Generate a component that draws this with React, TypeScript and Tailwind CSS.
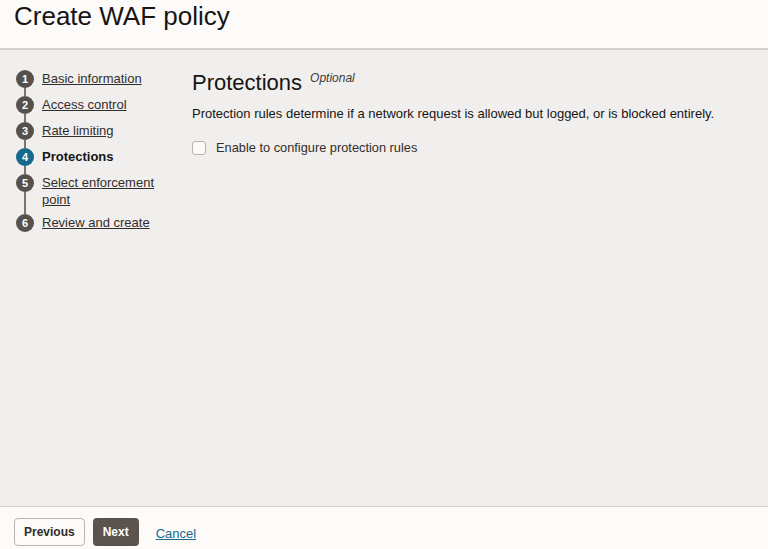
import React from 'react';

const STEPS = [
  { id: 1, label: 'Basic information' },
  { id: 2, label: 'Access control' },
  { id: 3, label: 'Rate limiting' },
  { id: 4, label: 'Protections', active: true },
  { id: 5, label: 'Select enforcement point' },
  { id: 6, label: 'Review and create' },
];

const Stepper: React.FC = () => (
  <ol className="flex flex-col">
    {STEPS.map((step, i) => {
      const last = i === STEPS.length - 1;
      return (
        <li key={step.id} className="flex gap-[8px]">
          <div className="flex w-[18px] flex-col items-center">
            <span
              className={`flex h-[18px] w-[18px] shrink-0 items-center justify-center rounded-full text-[11px] font-bold text-white ${
                step.active ? 'bg-[#17698b]' : 'bg-[#57514d]'
              }`}
            >
              {step.id}
            </span>
            {!last && <span className="w-[2px] flex-1 bg-[#7a7470]" />}
          </div>
          <div className={`w-[118px] ${last ? '' : 'min-h-[26px] pb-[6px]'}`}>
            {step.active ? (
              <span className="block text-[13px] font-bold leading-[17px] text-[#161513]">{step.label}</span>
            ) : (
              <a href="#" className="block text-[13px] leading-[17px] text-[#312d2a] underline">
                {step.label}
              </a>
            )}
          </div>
        </li>
      );
    })}
  </ol>
);

export default function App() {
  return (
    <div className="flex h-[549px] w-[768px] flex-col bg-[#f1efed] font-['Liberation_Sans',Arial,sans-serif] text-[#161513]">
      <header className="h-[50px] shrink-0 border-b-2 border-[#d4d1cc] bg-[#fcfbfa] px-[14px] pt-[1px]">
        <h1 className="text-[26px] leading-[30px] text-[#161513]">Create WAF policy</h1>
      </header>

      <main className="flex flex-1 gap-[32px] px-[16px] pt-[20px]">
        <Stepper />
        <section className="flex-1">
          <div className="flex items-start gap-[8px]">
            <h2 className="text-[22px] leading-[26px]">Protections</h2>
            <span className="-mt-[1px] text-[12px] italic text-[#3d3935]">Optional</span>
          </div>
          <p className="mt-[10px] text-[13px] leading-[16px]">
            Protection rules determine if a network request is allowed but logged, or is blocked entirely.
          </p>
          <label className="mt-[18px] flex items-center gap-[10px]">
            <span className="h-[14px] w-[14px] rounded-[3px] border border-[#b8b4b0] bg-[#fcfbfa]" />
            <span className="text-[12.8px] leading-[16px] text-[#312d2a]">Enable to configure protection rules</span>
          </label>
        </section>
      </main>

      <footer className="flex h-[43px] shrink-0 items-start gap-[8px] border-t border-[#d4d1cc] bg-[#fcfbfa] px-[14px] pt-[11px]">
        <button className="h-[28px] rounded-[4px] border border-[#b8b4b0] bg-[#fcfbfa] px-[9px] text-[12px] font-bold text-[#312d2a]">
          Previous
        </button>
        <button className="h-[28px] rounded-[4px] bg-[#5b534e] px-[10px] text-[12px] font-bold text-white">Next</button>
        <a href="#" className="ml-[9px] mt-[6px] text-[13px] text-[#17698b] underline">
          Cancel
        </a>
      </footer>
    </div>
  );
}
